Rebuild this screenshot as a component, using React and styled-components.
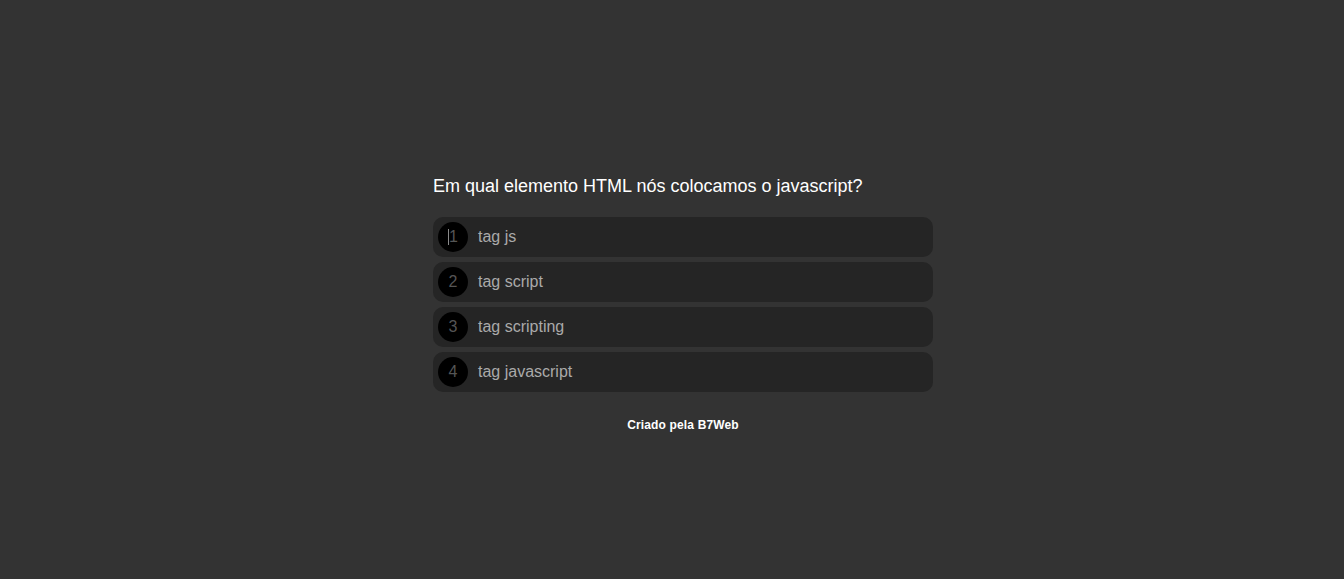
import React from "react";
import styled, { createGlobalStyle } from "styled-components";

const Global = createGlobalStyle`
  html, body { margin: 0; padding: 0; background: #333333; }
  body { font-family: "Liberation Sans", Arial, sans-serif; min-height: 579px; }
`;

const Page = styled.div`
  display: flex;
  flex-direction: column;
  align-items: center;
  padding-top: 175px;
  padding-left: 22px;
`;

const Quiz = styled.div`
  width: 500px;
`;

const Question = styled.div`
  color: #ffffff;
  font-size: 18px;
  line-height: 22px;
  margin-bottom: 20px;
`;

const Options = styled.div`
  display: flex;
  flex-direction: column;
  gap: 5px;
`;

const Option = styled.div`
  display: flex;
  align-items: center;
  height: 40px;
  padding: 0 5px;
  box-sizing: border-box;
  background: #252525;
  border-radius: 10px;
  cursor: pointer;
`;

const Num = styled.span`
  position: relative;
  width: 30px;
  height: 30px;
  border-radius: 50%;
  background: #000000;
  color: #555555;
  font-size: 16px;
  display: flex;
  align-items: center;
  justify-content: center;
  margin-right: 10px;
  flex-shrink: 0;
`;

const Digit = styled.span`
  margin-left: ${(p) => (p.$caret ? "1px" : "0")};
`;

const Caret = styled.span`
  position: absolute;
  left: 10px;
  top: 7px;
  width: 1px;
  height: 16px;
  background: #8a8a8a;
`;

const Label = styled.span`
  color: #aaaaaa;
  font-size: 16px;
`;

const Footer = styled.div`
  margin-top: 26px;
  color: #ffffff;
  font-size: 12px;
  font-weight: bold;
  letter-spacing: 0.15px;
  text-align: center;
`;

const answers = ["tag js", "tag script", "tag scripting", "tag javascript"];

export default function App() {
  return (
    <>
      <Global />
      <Page>
        <Quiz>
          <Question>Em qual elemento HTML nós colocamos o javascript?</Question>
          <Options>
            {answers.map((a, i) => (
              <Option key={a}>
                <Num>
                  {i === 0 && <Caret />}
                  <Digit $caret={i === 0}>{i + 1}</Digit>
                </Num>
                <Label>{a}</Label>
              </Option>
            ))}
          </Options>
          <Footer>Criado pela B7Web</Footer>
        </Quiz>
      </Page>
    </>
  );
}
